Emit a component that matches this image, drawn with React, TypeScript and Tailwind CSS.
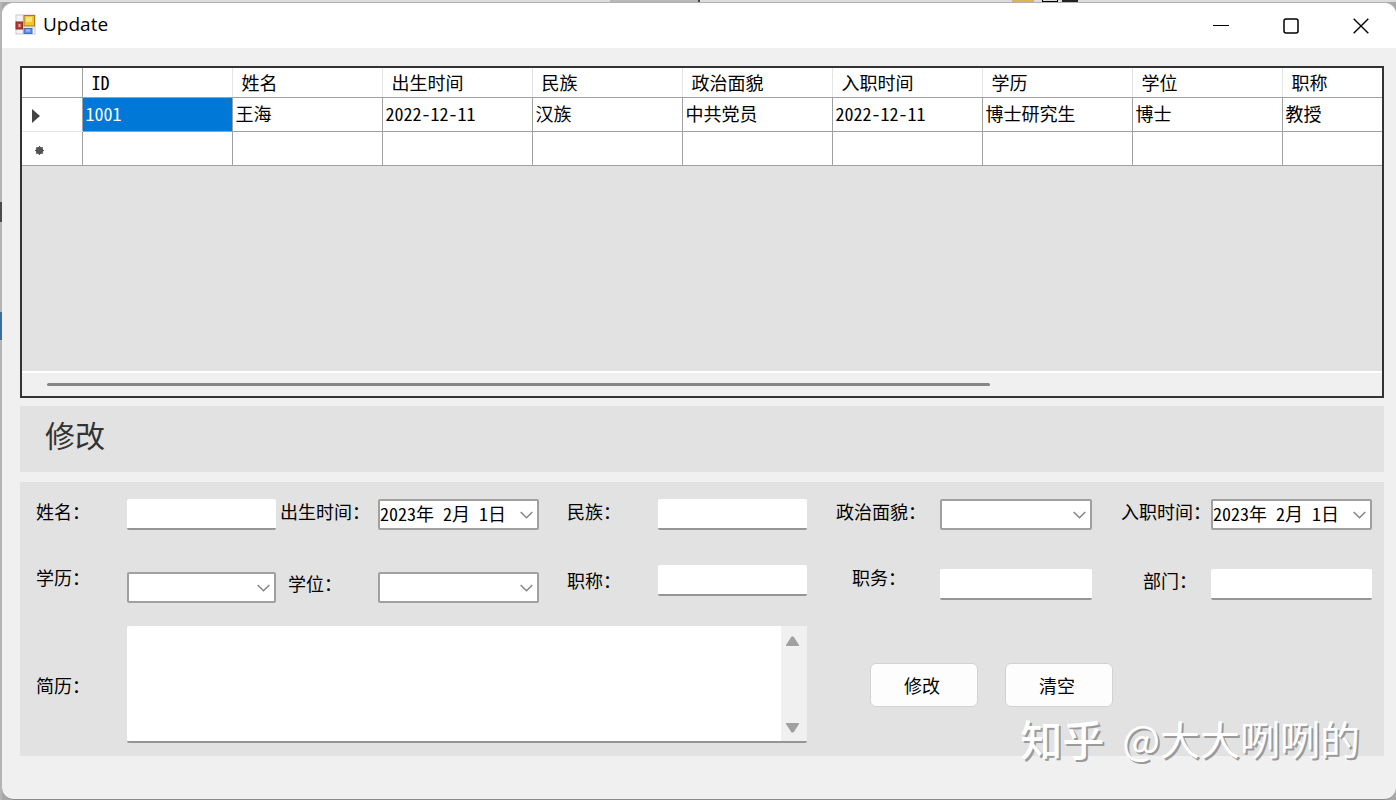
import React, { useState } from "react";

const columns = ["ID", "姓名", "出生时间", "民族", "政治面貌", "入职时间", "学历", "学位", "职称"];

const employees = [
  ["1001", "王海", "2022-12-11", "汉族", "中共党员", "2022-12-11", "博士研究生", "博士", "教授"],
];

const AppIcon = () => (
  <svg width="22" height="22" viewBox="0 0 22 22" aria-hidden="true">
    <rect x="1" y="1" width="19" height="19" fill="#f4f4f6" stroke="#c9cad2" />
    <path d="M1 8H20M8 1V20M1 14H20" stroke="#d6d8e0" />
    <rect x="9" y="1.5" width="10.5" height="10.5" fill="#f2c230" stroke="#a47d1b" />
    <rect x="11" y="3" width="6" height="5" fill="#fbe283" />
    <rect x="1" y="8" width="6.5" height="7" fill="#b93a2e" stroke="#8a2a25" />
    <rect x="3.5" y="10" width="2" height="3" fill="#eda39a" />
    <rect x="9" y="14.5" width="8" height="5" fill="#5d8fe0" stroke="#4470c0" />
    <rect x="11" y="15.5" width="4" height="2" fill="#9cc0f4" />
  </svg>
);

const Chevron = () => (
  <svg width="13" height="8" viewBox="0 0 13 8" fill="none" stroke="#858585" strokeWidth="1.5" aria-hidden="true">
    <path d="M0.7 1L6.5 6.8L12.3 1" />
  </svg>
);

type FieldProps = {
  id: string;
  label: string;
  indent: string;
  labelAlign?: string;
  align?: string;
};

const FieldLabel: React.FC<FieldProps> = ({ id, label, indent, labelAlign = "self-start" }) => (
  <label htmlFor={id} className={`block h-8 whitespace-nowrap leading-6 ${indent} ${labelAlign}`}>
    {label}
  </label>
);

const TextField: React.FC<FieldProps> = (props) => (
  <>
    <FieldLabel {...props} />
    <input
      id={props.id}
      type="text"
      className={`h-[31px] w-full min-w-0 rounded-xs border-b-2 border-[#959595] bg-white px-1 outline-none ${props.align ?? "self-start"}`}
    />
  </>
);

const SelectField: React.FC<FieldProps & { options: string[] }> = ({ options, ...props }) => (
  <>
    <FieldLabel {...props} />
    <div className={`relative ${props.align ?? "self-start"}`}>
      <select
        id={props.id}
        defaultValue=""
        className="block h-[31px] w-full appearance-none rounded-xs border-2 border-[#a0a0a0] bg-white px-1 outline-none"
      >
        <option value=""></option>
        {options.map((option) => (
          <option key={option}>{option}</option>
        ))}
      </select>
      <span className="pointer-events-none absolute inset-y-0 right-1.5 flex items-center">
        <Chevron />
      </span>
    </div>
  </>
);

const DateField: React.FC<FieldProps> = (props) => {
  const [value, setValue] = useState("2023年 2月 1日");

  return (
    <>
      <FieldLabel {...props} />
      <div className="flex h-[31px] min-w-0 items-center rounded-xs border-2 border-[#a0a0a0] bg-white pr-1">
        <input
          id={props.id}
          type="text"
          value={value}
          onChange={(e) => setValue(e.target.value)}
          className="h-full w-full min-w-0 flex-1 pb-1 outline-none"
        />
        <button type="button" aria-label={`选择${props.label}`}>
          <Chevron />
        </button>
      </div>
    </>
  );
};

const TitleBar = () => (
  <header className="flex h-[45px] items-center justify-between bg-white pl-[13px]">
    <div className="flex items-center gap-1.5">
      <AppIcon />
      <h1 className="pb-0.5 font-['Open_Sans','Noto_Sans',sans-serif] text-[19px]">Update</h1>
    </div>
    <div className="flex">
      <button aria-label="最小化" className="flex h-10 w-[70px] items-center justify-center">
        <svg width="16" height="16" stroke="#000" strokeWidth="1.2">
          <path d="M0 7.5H16" />
        </svg>
      </button>
      <button aria-label="最大化" className="flex h-10 w-[70px] items-center justify-center">
        <svg width="16" height="16" fill="none" stroke="#000" strokeWidth="1.5">
          <rect x="1" y="1" width="14" height="14" rx="2" />
        </svg>
      </button>
      <button aria-label="关闭" className="flex h-10 w-[70px] items-center justify-center">
        <svg width="16" height="16" stroke="#000" strokeWidth="1.4">
          <path d="M0.7 0.7L15.3 15.3M15.3 0.7L0.7 15.3" />
        </svg>
      </button>
    </div>
  </header>
);

const EmployeeGrid = () => (
  <section className="flex min-h-[200px] flex-1 flex-col overflow-hidden border-2 border-[#333] bg-[#e2e2e2]">
    <div className="flex-1 overflow-hidden">
      <table className="w-[1410px] table-fixed border-collapse bg-white">
        <thead>
          <tr className="h-[29px]">
            <th className="w-[60px] border-r border-b border-[#a0a0a0]" aria-label="行" />
            {columns.map((column) => (
              <th
                key={column}
                className="w-[150px] border-r border-b border-r-[#e4e4e4] border-b-[#a0a0a0] pl-[9px] text-left leading-6 font-normal"
              >
                {column}
              </th>
            ))}
          </tr>
        </thead>
        <tbody>
          {employees.map((row) => (
            <tr key={row[0]} className="h-[34px]">
              <th className="border-r border-b border-r-[#a0a0a0] border-b-[#e4e4e4] pt-1 pl-2.5">
                <svg width="8" height="14" viewBox="0 0 8 14" fill="#444">
                  <path d="M0 0L8 7L0 14Z" />
                </svg>
              </th>
              {row.map((cell, i) => (
                <td
                  key={columns[i]}
                  className={`border-r border-b border-[#a0a0a0] pb-0.5 pl-[3px] leading-6 ${i === 0 ? "bg-[#0078d7] text-white" : ""}`}
                >
                  {cell}
                </td>
              ))}
            </tr>
          ))}
          <tr className="h-[34px]">
            <th className="border-r border-b border-[#a0a0a0] pt-1 pl-[13px]">
              <svg width="9" height="9" viewBox="0 0 9 9" stroke="#555" strokeWidth="1.5">
                <circle cx="4.5" cy="4.5" r="3" fill="#444" />
                <path d="M4.5 0V9M0 4.5H9M1.2 1.2L7.8 7.8M7.8 1.2L1.2 7.8" strokeWidth="1" />
              </svg>
            </th>
            {columns.map((column) => (
              <td key={column} className="border-r border-b border-[#a0a0a0]" />
            ))}
          </tr>
        </tbody>
      </table>
    </div>
    <div className="flex h-[25px] items-center border-t-2 border-white bg-[#f0f0f0] px-[25px]">
      <div className="h-[3px] w-[72%] rounded-full bg-[#868686]" />
    </div>
  </section>
);

const EditForm = () => (
  <form
    className="grid grid-cols-[91fr_149fr_102fr_161fr_119fr_149fr_133fr_152fr_119fr_161fr] grid-rows-[31px_35px_38px_23px_117px] bg-[#e2e2e2] pt-[17px] pr-3 pb-[13px] pl-4"
    onSubmit={(e) => e.preventDefault()}
  >
    <TextField id="name" label="姓名：" indent="pl-0" />
    <DateField id="birth" label="出生时间：" indent="pl-1" />
    <TextField id="nation" label="民族：" indent="pl-7" />
    <SelectField id="politics" label="政治面貌：" indent="pl-[29px]" options={["中共党员", "共青团员", "群众"]} />
    <DateField id="hired" label="入职时间：" indent="pl-[29px]" />

    <div className="col-span-full" />

    <SelectField
      id="education"
      label="学历："
      indent="pl-0"
      align="self-end"
      options={["本科", "硕士研究生", "博士研究生"]}
    />
    <SelectField
      id="degree"
      label="学位："
      indent="pl-3"
      labelAlign="self-end"
      align="self-end"
      options={["学士", "硕士", "博士"]}
    />
    <TextField id="title" label="职称：" indent="pl-7" labelAlign="self-center" />
    <TextField id="post" label="职务：" indent="pl-[45px]" align="self-center" />
    <TextField id="department" label="部门：" indent="pl-[51px]" labelAlign="self-center" align="self-center" />

    <div className="col-span-full" />

    <label htmlFor="resume" className="self-center">
      简历：
    </label>
    <div className="col-span-5 flex rounded-xs border-b-2 border-[#959595] bg-white">
      <textarea id="resume" className="min-w-0 flex-1 resize-none p-1 outline-none" />
      <div
        className="flex w-[26px] flex-col items-center justify-between bg-[#f0f0f0] pt-2.5 pr-[3px] pb-2"
        aria-hidden="true"
      >
        <svg width="13" height="10" fill="#a0a0a0">
          <path d="M5.5 0.5H7.5L13 9V10H0V9Z" />
        </svg>
        <svg width="13" height="10" fill="#a0a0a0">
          <path d="M0 0H13V1L7.5 9.5H5.5L0 1Z" />
        </svg>
      </div>
    </div>
    <div className="col-span-4 flex items-center gap-[27px] pl-[63px]">
      <button type="submit" className="h-11 w-[108px] rounded-md border border-[#d2d2d2] bg-[#fdfdfd] pr-1">
        修改
      </button>
      <button type="reset" className="h-11 w-[108px] rounded-md border border-[#d2d2d2] bg-[#fdfdfd] pr-1">
        清空
      </button>
    </div>
  </form>
);

// Slivers of the desktop that show past the window's top and left edges
const DesktopTop = () => (
  <div className="flex h-[2px] bg-[#dcdcdc]">
    <div className="w-[610px]" />
    <div className="w-[88px] bg-[#b8b8b8]" />
    <div className="w-[2px] bg-[#444]" />
    <div className="w-[312px]" />
    <div className="w-[22px] bg-[#d9b65c]" />
    <div className="w-2" />
    <div className="w-4 border-x border-b border-black" />
    <div className="w-1" />
    <div className="w-4 bg-[#222]" />
  </div>
);

const DesktopLeft = () => (
  <div className="flex w-[2px] flex-col bg-[#b4b4b4]">
    <div className="h-[200px]" />
    <div className="h-5 bg-[#4a4a4a]" />
    <div className="h-[90px]" />
    <div className="h-7 bg-[#3d6d95]" />
  </div>
);

export default function App() {
  return (
    <div className="relative flex min-h-screen flex-col bg-[#a8a8a8] font-['Noto_Sans_Mono_CJK_SC','Noto_Sans_CJK_SC',monospace] text-lg text-black">
      <DesktopTop />
      <div className="flex flex-1">
        <DesktopLeft />
        <div className="flex min-w-0 flex-1 flex-col overflow-hidden rounded-xl border-t border-b border-t-[#b0b0b0] border-b-[#8a8a8a] bg-[#f0f0f0]">
          <TitleBar />
          <main className="flex flex-1 flex-col pt-[18px] pr-3 pb-[43px] pl-[18px]">
            <EmployeeGrid />
            <h2 className="mt-2 bg-[#e2e2e2] pt-2 pb-[18px] pl-[25px] text-[30px] leading-10 font-light text-[#333]">
              修改
            </h2>
            <div className="mt-2.5">
              <EditForm />
            </div>
          </main>
        </div>
      </div>
      <p className="pointer-events-none absolute right-9 bottom-8 flex items-center gap-[18px] font-['Noto_Sans_CJK_SC',sans-serif] text-[40px] leading-[60px] text-white [text-shadow:2px_2px_0_#9a9a9a]">
        <span className="text-[42px] font-medium">知乎</span>
        <span>@大大咧咧的</span>
      </p>
    </div>
  );
}
